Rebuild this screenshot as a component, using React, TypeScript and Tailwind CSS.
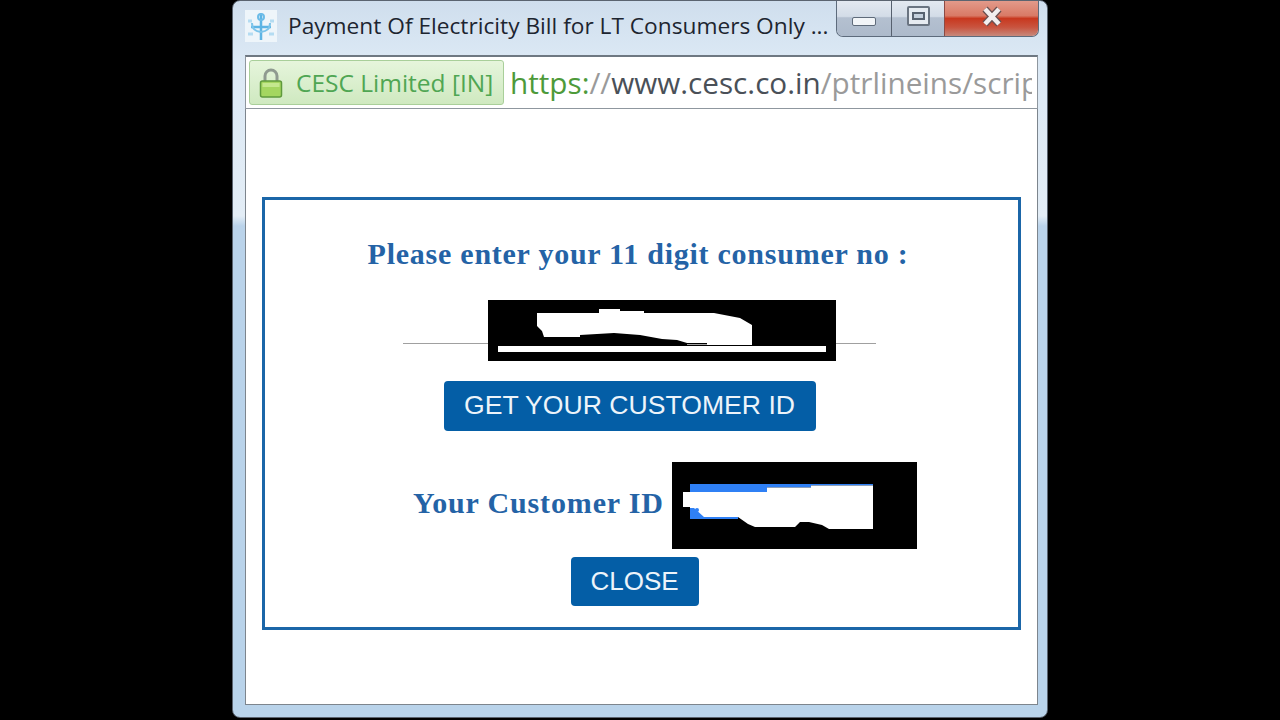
function SiteIcon() {
  return (
    <svg width="32" height="32" viewBox="0 0 32 32" className="shrink-0">
      <rect width="32" height="32" fill="#eef5fa" />
      <path d="M16 3v27M6 17h20" stroke="#5db4e4" strokeWidth="2.5" fill="none" />
      <path d="M7 13c0 6 3 8 9 9 6-1 9-3 9-9" stroke="#7cc4ea" strokeWidth="2" fill="none" />
      <circle cx="16" cy="7" r="3" fill="none" stroke="#6dbce8" strokeWidth="2" />
      <path d="M3 11h4M25 11h4M3 24h5M24 24h5" stroke="#b4dcf2" strokeWidth="3" />
    </svg>
  );
}

function LockIcon() {
  return (
    <svg width="24" height="32" viewBox="0 0 24 32" className="shrink-0">
      <path d="M6 15V9a6 6 0 0 1 12 0v6" fill="none" stroke="#8f9a90" strokeWidth="3" />
      <rect x="1.5" y="14" width="21" height="16" rx="2" fill="#a4d660" stroke="#5f9a3c" strokeWidth="1.5" />
      <rect x="3.5" y="16" width="17" height="4" fill="#c4e88e" />
    </svg>
  );
}

function TitleButtons() {
  return (
    <div className="flex h-[36px] shrink-0 overflow-hidden rounded-b-[7px] border border-t-0 border-[#5d6b7c]">
      <div className="flex w-[55px] items-center justify-center border-r border-[#56606e] bg-[linear-gradient(to_bottom,#e3e9f1_0%,#d3dce7_44%,#b4c0d0_48%,#adbacb_100%)]">
        <div className="mt-[5px] h-[9px] w-[24px] rounded-[2px] border border-[#5f6b7a] bg-[#f2f5f8]" />
      </div>
      <div className="flex w-[53px] items-center justify-center border-r border-[#8c4a44] bg-[linear-gradient(to_bottom,#e3e9f1_0%,#d3dce7_44%,#b4c0d0_48%,#adbacb_100%)]">
        <div className="mb-[5px] flex h-[20px] w-[23px] items-center justify-center rounded-[2px] border-2 border-[#6a7481] bg-[#e6ebf1]">
          <div className="h-[8px] w-[13px] border-2 border-[#58626f] bg-[#c5d0dc]" />
        </div>
      </div>
      <div className="flex w-[93px] items-center justify-center bg-[linear-gradient(to_bottom,#e29a8a_0%,#d97a66_42%,#c8381f_50%,#c9543f_75%,#c7897c_100%)]">
        <svg width="28" height="22" viewBox="0 0 28 22" className="mb-[4px]">
          <path d="M7 3l14 15M21 3L7 18" stroke="#6b5050" strokeWidth="7" />
          <path d="M7 3l14 15M21 3L7 18" stroke="#f2eeee" strokeWidth="4.5" />
        </svg>
      </div>
    </div>
  );
}

function Redacted({ className, children }: { className: string; children: React.ReactNode }) {
  return <div className={`absolute bg-black ${className}`}>{children}</div>;
}

export default function App() {
  return (
    <div className="flex h-[720px] w-[1280px] justify-center overflow-hidden bg-black">
      <div className="flex h-[718px] w-[816px] flex-col rounded-t-[8px] rounded-b-[8px] border border-[#5b6470] bg-[linear-gradient(to_bottom,#cfdeed_0px,#dce9f5_60px,#e3edf6_215px,#bad3ea_225px,#b9d3ea_100%)] pb-[12px] pl-[12px] pr-[9px]">
        <div className="flex h-[54px] shrink-0 items-start">
          <div className="mt-[9px]">
            <SiteIcon />
          </div>
          <div className="mt-[9px] ml-[11px] w-[548px] shrink-0 font-['Open_Sans',sans-serif] text-[22.7px] leading-[32px] text-[#1d2530]">
            Payment Of Electricity Bill for LT Consumers Only ...
          </div>
          <TitleButtons />
        </div>

        <div className="flex h-[54px] shrink-0 items-center overflow-hidden border-t-2 border-b border-t-[#6e7882] border-b-[#8f979f] border-x border-x-[#8f979f] bg-white pl-[3px]">
          <div className="flex h-[45px] w-[255px] shrink-0 items-center rounded-[3px] border border-[#a9cf9a] bg-gradient-to-b from-[#e6f5dc] to-[#cfe9c0] pl-[9px] font-['Open_Sans',sans-serif] text-[24.5px] text-[#4fa653]">
            <LockIcon />
            <span className="ml-[13px] whitespace-nowrap pt-[2px]">CESC Limited [IN]</span>
          </div>
          <div className="ml-[6px] w-[522px] overflow-hidden whitespace-nowrap pt-[2px] font-['Open_Sans',sans-serif] text-[29.7px] text-[#9a9a9a]">
            <span className="text-[#4d9a3a]">https:</span>
            <span>//</span>
            <span className="text-[#4a5058]">www.cesc.co.in</span>
            <span>/ptrlineins/scripts</span>
          </div>
        </div>

        <div className="min-h-0 flex-1 border-x border-b border-[#7d858d] bg-white pt-[88px] pl-[16px]">
          <div className="flex h-[433px] w-[759px] flex-col items-center border-[3px] border-[#1b66a8] pt-[34px]">
            <h1 className="h-[40px] pr-[7px] font-['Liberation_Serif',serif] text-[30px] font-bold leading-[40px] tracking-[0.75px] text-[#2463a6]">
              Please enter your 11 digit consumer no :
            </h1>

            <div className="relative mt-[26px] h-[61px] w-full">
              <div className="absolute top-[43px] left-[138px] h-[1px] w-[473px] bg-[#a0a0a0]" />
              <Redacted className="top-0 left-[223px] h-[61px] w-[348px]">
                <svg width="348" height="61" viewBox="0 0 348 61">
                  <path
                    d="M49 13h62v-4h21v2h24v2h70l26 5 12 7v20h-45v-2h-20l-10-3-15-1-22-4-26-2-34 2v2H56l-2-6-5-5z"
                    fill="#fff"
                  />
                  <rect x="199" y="44" width="20" height="1" fill="#a0a0a0" />
                  <rect x="10" y="46" width="328" height="6" fill="#fff" />
                </svg>
              </Redacted>
            </div>

            <button className="mt-[20px] mr-[24px] h-[50px] w-[372px] rounded-[4px] bg-[#045ea6] pb-[1px] font-['Liberation_Sans',sans-serif] text-[26.6px] text-[#edf4fa]">
              GET YOUR CUSTOMER ID
            </button>

            <div className="mt-[31px] flex h-[87px] w-full items-center pl-[148px]">
              <span className="w-[259px] shrink-0 pb-[6px] font-['Liberation_Serif',serif] text-[30px] font-bold tracking-[0.85px] text-[#2463a6]">
                Your Customer ID
              </span>
              <div className="relative h-[87px] w-[245px] shrink-0">
                <Redacted className="inset-0">
                  <svg width="245" height="87" viewBox="0 0 245 87">
                    <rect x="18" y="22" width="77" height="8" fill="#2f80f5" />
                    <rect x="18" y="45" width="48" height="12" fill="#2f80f5" />
                    <rect x="95" y="22" width="44" height="3.5" fill="#2f80f5" />
                    <rect x="139" y="22" width="62" height="1.5" fill="#2f80f5" />
                    <path
                      d="M95 25.5h44V23.5h62V67h-44l-7-4-13-3h-9l-5 5H83l-7-3-10-7H32l-10-9h-4v-1h-7V30h84z"
                      fill="#fff"
                    />
                    <circle cx="25" cy="48" r="2" fill="#2f80f5" />
                  </svg>
                </Redacted>
              </div>
            </div>

            <button className="mt-[8px] mr-[14px] h-[49px] w-[128px] rounded-[4px] bg-[#045ea6] font-['Liberation_Sans',sans-serif] text-[26px] text-[#edf4fa]">
              CLOSE
            </button>
          </div>
        </div>
      </div>
    </div>
  );
}
